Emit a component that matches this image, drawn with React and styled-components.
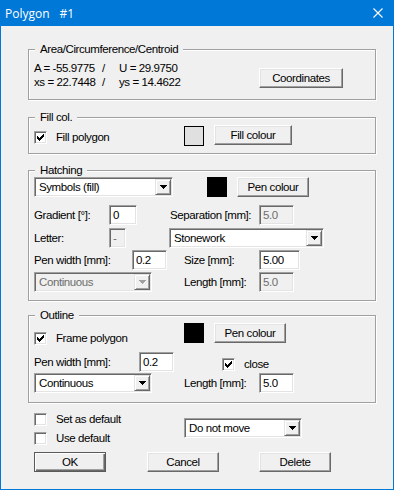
import React from 'react';
import styled, { createGlobalStyle, css } from 'styled-components';

const Global = createGlobalStyle`
  html, body { margin: 0; padding: 0; background: #ffffff; }
  body { font-family: "Liberation Sans", Arial, sans-serif; font-size: 11.5px; }
`;

const Window = styled.div`
  width: 394px;
  height: 490px;
  box-sizing: border-box;
  background: #0078d7;
  padding: 0 1px 1px;
  display: flex;
  flex-direction: column;
`;

const TitleBar = styled.div`
  height: 26px;
  flex: none;
  display: flex;
  align-items: center;
  padding: 0 10px 0 4px;
  color: #ffffff;
  font-family: "Open Sans", "Noto Sans", sans-serif;
  font-size: 12px;
`;

const TitleText = styled.div`
  flex: 1;
  display: flex;
  gap: 10px;
`;

const Body = styled.div`
  flex: 1;
  background: #f0f0f0;
  padding: 23px 0 0 27px;
  color: #000;
  letter-spacing: -0.4px;
`;

const Group = styled.div`
  position: relative;
  box-sizing: border-box;
  width: 348px;
  height: ${(p) => p.$h}px;
  margin-top: ${(p) => p.$mt || 0}px;
  border: 1px solid #a0a0a0;
  box-shadow: inset 1px 1px #ffffff, 1px 1px #ffffff;
  padding: 0 5px;
`;

const Legend = styled.span`
  position: absolute;
  top: -8px;
  left: 6px;
  padding: 0 5px;
  background: #f0f0f0;
  line-height: 14px;
  white-space: nowrap;
`;

const Row = styled.div`
  display: flex;
  align-items: ${(p) => p.$align || 'center'};
  margin-top: ${(p) => p.$mt || 0}px;
`;

const Label = styled.span`
  flex: none;
  width: ${(p) => p.$w}px;
  margin-left: ${(p) => p.$ml || 0}px;
  line-height: 20px;
  white-space: nowrap;
`;

const Values = styled.div`
  flex: none;
  width: 225px;
  padding-top: 11px;
  display: grid;
  grid-template-columns: 68px 17px auto;
  line-height: 14px;
  white-space: nowrap;
`;

const Btn = styled.button`
  flex: none;
  box-sizing: border-box;
  width: ${(p) => p.$w}px;
  height: 20px;
  margin: ${(p) => p.$mt || 0}px 0 0 ${(p) => p.$ml || 0}px;
  padding: 0;
  font: inherit;
  letter-spacing: inherit;
  color: #000;
  background: #f0f0f0;
  border: 1px solid;
  border-color: #ffffff #696969 #696969 #ffffff;
  box-shadow: inset -1px -1px #a0a0a0, inset 1px 1px #e3e3e3;
  ${(p) =>
    p.$default &&
    css`
      border-color: #5a5a5a;
      box-shadow: inset 1px 1px #ffffff, inset -1px -1px #696969, inset -2px -2px #a0a0a0;
    `}
`;

const sunken = css`
  box-sizing: border-box;
  border: 1px solid;
  border-color: #a0a0a0 #ffffff #ffffff #a0a0a0;
  box-shadow: inset 1px 1px #696969, inset -1px -1px #e3e3e3;
`;

const Field = styled.div`
  ${sunken};
  flex: none;
  width: ${(p) => p.$w}px;
  height: 20px;
  padding: 0 3px;
  line-height: 18px;
  white-space: nowrap;
  background: ${(p) => (p.$disabled ? '#f0f0f0' : '#ffffff')};
  color: ${(p) => (p.$disabled ? '#6d6d6d' : '#000')};
`;

const ComboBox = styled.div`
  ${sunken};
  flex: none;
  display: flex;
  width: ${(p) => p.$w}px;
  height: 20px;
  padding: 1px;
  margin: ${(p) => p.$mt || 0}px 0 0 ${(p) => p.$ml || 0}px;
  background: ${(p) => (p.$disabled ? '#f0f0f0' : '#ffffff')};
  color: ${(p) => (p.$disabled ? '#6d6d6d' : '#000')};
`;

const ComboText = styled.span`
  flex: 1;
  padding-left: 3px;
  line-height: 16px;
  white-space: nowrap;
  overflow: hidden;
`;

const DropBtn = styled.span`
  flex: none;
  width: 16px;
  box-sizing: border-box;
  background: #f0f0f0;
  border: 1px solid;
  border-color: #e3e3e3 #696969 #696969 #e3e3e3;
  box-shadow: inset 1px 1px #ffffff, inset -1px -1px #a0a0a0;
  display: flex;
  align-items: center;
  justify-content: center;
`;

const Swatch = styled.div`
  flex: none;
  box-sizing: border-box;
  width: 20px;
  height: 20px;
  margin: ${(p) => p.$mt || 0}px 0 0 ${(p) => p.$ml || 0}px;
  border: 1px solid #000;
  background: ${(p) => p.$color};
`;

const CheckWrap = styled.div`
  flex: none;
  display: flex;
  align-items: center;
  gap: 9px;
  height: 13px;
  width: ${(p) => (p.$w ? `${p.$w}px` : 'auto')};
  margin: ${(p) => p.$mt || 0}px 0 0 ${(p) => p.$ml || 0}px;
  white-space: nowrap;
  line-height: 13px;
`;

const Box = styled.span`
  ${sunken};
  flex: none;
  width: 13px;
  height: 13px;
  background: #ffffff;
  display: flex;
  align-items: center;
  justify-content: center;
`;

const CheckCol = styled.div`
  flex: none;
  width: 150px;
  display: flex;
  flex-direction: column;
  gap: 6px;
`;

const Footer = styled.div`
  padding-left: 6px;
`;

const Arrow = ({ disabled }) => (
  <svg width="7" height="4" viewBox="0 0 7 4" shapeRendering="crispEdges">
    <g fill={disabled ? '#a0a0a0' : '#000'}>
      <rect x="0" y="0" width="7" height="1" />
      <rect x="1" y="1" width="5" height="1" />
      <rect x="2" y="2" width="3" height="1" />
      <rect x="3" y="3" width="1" height="1" />
    </g>
  </svg>
);

const Tick = () => (
  <svg width="7" height="7" viewBox="0 0 7 7" shapeRendering="crispEdges">
    <g fill="#000">
      <rect x="0" y="2" width="1" height="3" />
      <rect x="1" y="3" width="1" height="3" />
      <rect x="2" y="4" width="1" height="3" />
      <rect x="3" y="3" width="1" height="3" />
      <rect x="4" y="2" width="1" height="3" />
      <rect x="5" y="1" width="1" height="3" />
      <rect x="6" y="0" width="1" height="3" />
    </g>
  </svg>
);

const Combo = ({ w, ml, mt, disabled, children }) => (
  <ComboBox $w={w} $ml={ml} $mt={mt} $disabled={disabled}>
    <ComboText>{children}</ComboText>
    <DropBtn>
      <Arrow disabled={disabled} />
    </DropBtn>
  </ComboBox>
);

const Check = ({ checked, w, ml, mt, children }) => (
  <CheckWrap $w={w} $ml={ml} $mt={mt}>
    <Box>{checked && <Tick />}</Box>
    <span>{children}</span>
  </CheckWrap>
);

const CloseIcon = () => (
  <svg width="10" height="10" viewBox="0 0 10 10">
    <path d="M0.5 0.5 L9.5 9.5 M9.5 0.5 L0.5 9.5" stroke="#fff" strokeWidth="1.1" fill="none" />
  </svg>
);

export default function App() {
  return (
    <>
      <Global />
      <Window>
        <TitleBar>
          <TitleText>
            <span>Polygon</span>
            <span>#1</span>
          </TitleText>
          <CloseIcon />
        </TitleBar>
        <Body>
          <Group $h={51}>
            <Legend>Area/Circumference/Centroid</Legend>
            <Row $align="flex-start">
              <Values>
                <span>A = -55.9775</span>
                <span>/</span>
                <span>U = 29.9750</span>
                <span>xs = 22.7448</span>
                <span>/</span>
                <span>ys = 14.4622</span>
              </Values>
              <Btn $w={84} $mt={18}>Coordinates</Btn>
            </Row>
          </Group>

          <Group $h={37} $mt={17}>
            <Legend>Fill col.</Legend>
            <Row $align="flex-start" $mt={7}>
              <Check checked w={150} mt={6}>Fill polygon</Check>
              <Swatch $color="#e0e0e0" $mt={1} />
              <Btn $w={78} $ml={10}>Fill colour</Btn>
            </Row>
          </Group>

          <Group $h={131} $mt={16}>
            <Legend>Hatching</Legend>
            <Row $mt={6}>
              <Combo w={139}>Symbols (fill)</Combo>
              <Swatch $color="#000" $ml={34} />
              <Btn $w={72} $ml={10}>Pen colour</Btn>
            </Row>
            <Row $mt={8}>
              <Label $w={75}>Gradient [°]:</Label>
              <Field $w={28}>0</Field>
              <Label $w={89} $ml={33}>Separation [mm]:</Label>
              <Field $w={35} $disabled>5.0</Field>
            </Row>
            <Row $mt={3}>
              <Label $w={75}>Letter:</Label>
              <Field $w={17} $disabled>-</Field>
              <Combo w={155} ml={43}>Stonework</Combo>
            </Row>
            <Row $mt={2}>
              <Label $w={98}>Pen width [mm]:</Label>
              <Field $w={35}>0.2</Field>
              <Label $w={75} $ml={17}>Size [mm]:</Label>
              <Field $w={41}>5.00</Field>
            </Row>
            <Row $mt={2}>
              <Combo w={118} disabled>Continuous</Combo>
              <Label $w={75} $ml={32}>Length [mm]:</Label>
              <Field $w={35} $disabled>5.0</Field>
            </Row>
          </Group>

          <Group $h={88} $mt={14}>
            <Legend>Outline</Legend>
            <Row $align="flex-start" $mt={7}>
              <Check checked w={150} mt={9}>Frame polygon</Check>
              <Swatch $color="#000" />
              <Btn $w={72} $ml={10}>Pen colour</Btn>
            </Row>
            <Row $align="flex-start" $mt={7}>
              <Label $w={105}>Pen width [mm]:</Label>
              <Field $w={35}>0.2</Field>
              <Check checked ml={48} mt={6}>close</Check>
            </Row>
            <Row $mt={1}>
              <Combo w={118}>Continuous</Combo>
              <Label $w={75} $ml={32}>Length [mm]:</Label>
              <Field $w={35}>5.0</Field>
            </Row>
          </Group>

          <Footer>
            <Row $align="flex-start" $mt={10}>
              <CheckCol>
                <Check>Set as default</Check>
                <Check>Use default</Check>
              </CheckCol>
              <Combo w={118} mt={5}>Do not move</Combo>
            </Row>
            <Row $mt={7}>
              <Btn $w={72} $default>OK</Btn>
              <Btn $w={72} $ml={41}>Cancel</Btn>
              <Btn $w={72} $ml={40}>Delete</Btn>
            </Row>
          </Footer>
        </Body>
      </Window>
    </>
  );
}
